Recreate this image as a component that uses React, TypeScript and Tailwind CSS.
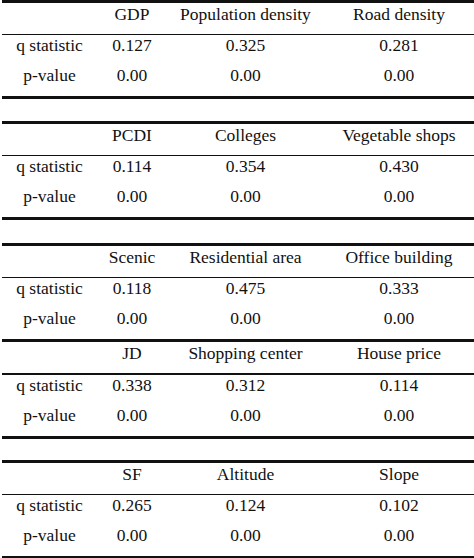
import React from "react";

type Block = {
  heads: [string, string, string];
  q: [string, string, string];
  top: boolean;
  mt: string;
};

const blocks: Block[] = [
  { heads: ["GDP", "Population density", "Road density"], q: ["0.127", "0.325", "0.281"], top: true, mt: "mt-0" },
  { heads: ["PCDI", "Colleges", "Vegetable shops"], q: ["0.114", "0.354", "0.430"], top: true, mt: "mt-[22px]" },
  { heads: ["Scenic", "Residential area", "Office building"], q: ["0.118", "0.475", "0.333"], top: true, mt: "mt-[23px]" },
  { heads: ["JD", "Shopping center", "House price"], q: ["0.338", "0.312", "0.114"], top: false, mt: "mt-0" },
  { heads: ["SF", "Altitude", "Slope"], q: ["0.265", "0.124", "0.102"], top: true, mt: "mt-[21.5px]" },
];

const cols = "grid grid-cols-[95px_70px_157px_150px] text-center whitespace-nowrap";

function TableBlock({ b }: { b: Block }) {
  return (
    <div className={b.mt}>
      {b.top && <div className="h-[2.5px] bg-[#111]" />}
      <div className={`${cols} h-[31px] leading-[23px]`}>
        <div></div>
        {b.heads.map((h) => (
          <div key={h}>{h}</div>
        ))}
      </div>
      <div className="h-[1.5px] bg-[#111]" />
      <div className={`${cols} h-[30px] leading-[21px]`}>
        <div>q statistic</div>
        {b.q.map((v, i) => (
          <div key={i}>{v}</div>
        ))}
      </div>
      <div className={`${cols} h-[31px] leading-[21px]`}>
        <div>p-value</div>
        <div>0.00</div>
        <div>0.00</div>
        <div>0.00</div>
      </div>
      <div className="h-[3px] bg-[#111]" />
    </div>
  );
}

export default function App() {
  return (
    <div className="w-[474px] h-[558px] bg-white overflow-hidden">
      <div className="ml-[2px] w-[472px] text-[17.5px] text-[#111] font-['Liberation_Serif','Times_New_Roman',serif]">
        {blocks.map((b, i) => (
          <TableBlock key={i} b={b} />
        ))}
      </div>
    </div>
  );
}
